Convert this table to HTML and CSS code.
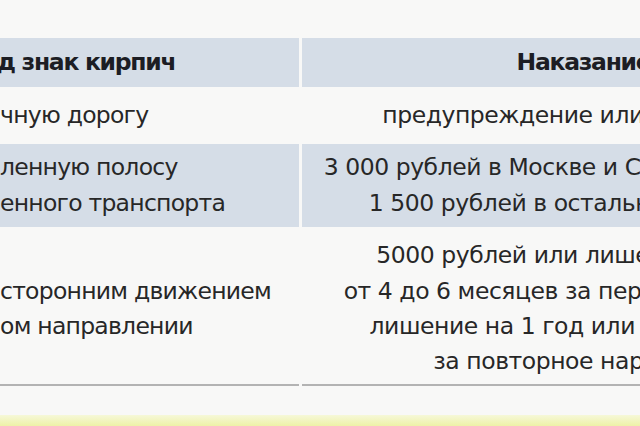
FILE: index.html
```html
<!DOCTYPE html>
<html lang="ru">
<head>
<meta charset="utf-8">
<link rel="stylesheet" href="styles.css">
</head>
<body>
<div class="page">
  <p class="caption">Штраф за проезд под знак кирпич в 2018 году</p>
  <div class="tbl">
    <div class="cell head c1"><span>д знак кирпич</span></div>
    <div class="cell head c2"><span>Наказание</span></div>

    <div class="cell r1 c1"><div class="ln">чную дорогу</div></div>
    <div class="cell r1 c2"><div class="ln">предупреждение или 500 рублей</div></div>

    <div class="cell r2 shade c1">
      <div class="ln">ленную полосу</div>
      <div class="ln">енного транспорта</div>
    </div>
    <div class="cell r2 shade c2">
      <div class="ln">3 000 рублей в Москве и Санкт-Петербурге</div>
      <div class="ln">1 500 рублей в остальных регионах</div>
    </div>

    <div class="cell r3 last c1">
      <div class="ln">сторонним движением</div>
      <div class="ln">ом направлении</div>
    </div>
    <div class="cell r3 last c2">
      <div class="ln">5000 рублей или лишение прав на</div>
      <div class="ln">от 4 до 6 месяцев за первое нарушение</div>
      <div class="ln">лишение на 1 год или 5 000 рублей</div>
      <div class="ln">за повторное нарушение</div>
    </div>
  </div>
  <div class="band"></div>
</div>
</body>
</html>
```

FILE: styles.css
```css
html, body {
  margin: 0;
  padding: 0;
  background: #f8f8f7;
  overflow: hidden;
}
.page {
  width: 640px;
  height: 426px;
  overflow: hidden;
  font-family: "DejaVu Sans", Verdana, sans-serif;
  font-size: 23.5px;
  letter-spacing: -0.75px;
  color: #272727;
}
.caption {
  margin: -31px 0 0 0;
  height: 35px;
  line-height: 35px;
  text-align: center;
  white-space: nowrap;
  color: #333;
}
.tbl {
  margin-top: 34px;
  margin-left: -20px;
  width: 877px;
  display: grid;
  grid-template-columns: 319px 555px;
  column-gap: 3px;
}
.cell {
  display: flex;
  flex-direction: column;
  justify-content: center;
  line-height: 35.3px;
  white-space: nowrap;
}
.c1 { padding-left: 20px; text-align: left; }
.c2 {
  text-align: center;
  padding-left: 10px;
  letter-spacing: -0.45px;
}
.head {
  height: 49px;
  background: #d5dde7;
  font-weight: bold;
  letter-spacing: -1.3px;
  color: #1c1d24;
}
.head.c1 { padding-left: 17px; }
.head.c2 { padding-left: 8px; letter-spacing: -1.3px; }
.shade { background: #d5dde7; }
.r1 { height: 57px; }
.r2 { height: 83px; }
.r3 {
  padding-top: 7px;
  box-sizing: border-box;
  height: 159px;
}
.last { border-bottom: 2px solid #b3b3b3; }
.band {
  margin-top: 29px;
  height: 12px;
  background: linear-gradient(#f6f8d8, #edf1a2);
}
```
